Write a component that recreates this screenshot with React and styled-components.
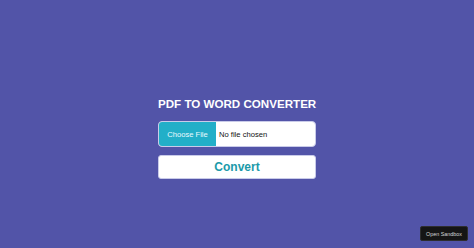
import React from "react";
import styled, { createGlobalStyle } from "styled-components";

const GlobalStyle = createGlobalStyle`
  html, body {
    margin: 0;
    padding: 0;
    background: #5254a8;
    font-family: "Liberation Sans", Arial, sans-serif;
  }
`;

const Page = styled.div`
  position: relative;
  width: 474px;
  height: 248px;
  background: #5254a8;
  overflow: hidden;
`;

const Converter = styled.div`
  width: 158px;
  margin: 0 auto;
  padding-top: 97px;
  display: flex;
  flex-direction: column;
  gap: 8px;
`;

const Title = styled.h1`
  margin: 0 0 2px;
  font-size: 11.6px;
  font-weight: bold;
  line-height: 14px;
  color: #ffffff;
  text-align: center;
  white-space: nowrap;
`;

const FileField = styled.label`
  display: flex;
  align-items: stretch;
  height: 26px;
  box-sizing: border-box;
  background: #ffffff;
  border: 1px solid #c9cbe9;
  border-radius: 4px;
  overflow: hidden;
`;

const ChooseButton = styled.span`
  display: flex;
  align-items: center;
  justify-content: center;
  width: 57px;
  background: #22afc8;
  color: #eafaff;
  font-size: 7.6px;
`;

const FileName = styled.span`
  display: flex;
  align-items: center;
  padding-left: 3px;
  color: #111111;
  font-size: 7.6px;
`;

const ConvertButton = styled.button`
  height: 24px;
  box-sizing: border-box;
  background: #ffffff;
  border: 1px solid #c9cbe9;
  border-radius: 3px;
  color: #1c9aa9;
  font-family: inherit;
  font-size: 12px;
  font-weight: bold;
  padding: 0;
  cursor: pointer;
`;

const SandboxButton = styled.a`
  position: absolute;
  right: 6px;
  bottom: 7px;
  height: 13px;
  padding: 0 5px;
  display: flex;
  align-items: center;
  background: #151515;
  border: 1px solid #2e2e2e;
  border-radius: 2px;
  color: #d6d6d6;
  font-size: 5.4px;
  text-decoration: none;
`;

export default function App() {
  return (
    <Page>
      <GlobalStyle />
      <Converter>
        <Title>PDF TO WORD CONVERTER</Title>
        <FileField>
          <ChooseButton>Choose File</ChooseButton>
          <FileName>No file chosen</FileName>
        </FileField>
        <ConvertButton>Convert</ConvertButton>
      </Converter>
      <SandboxButton href="#">Open Sandbox</SandboxButton>
    </Page>
  );
}
